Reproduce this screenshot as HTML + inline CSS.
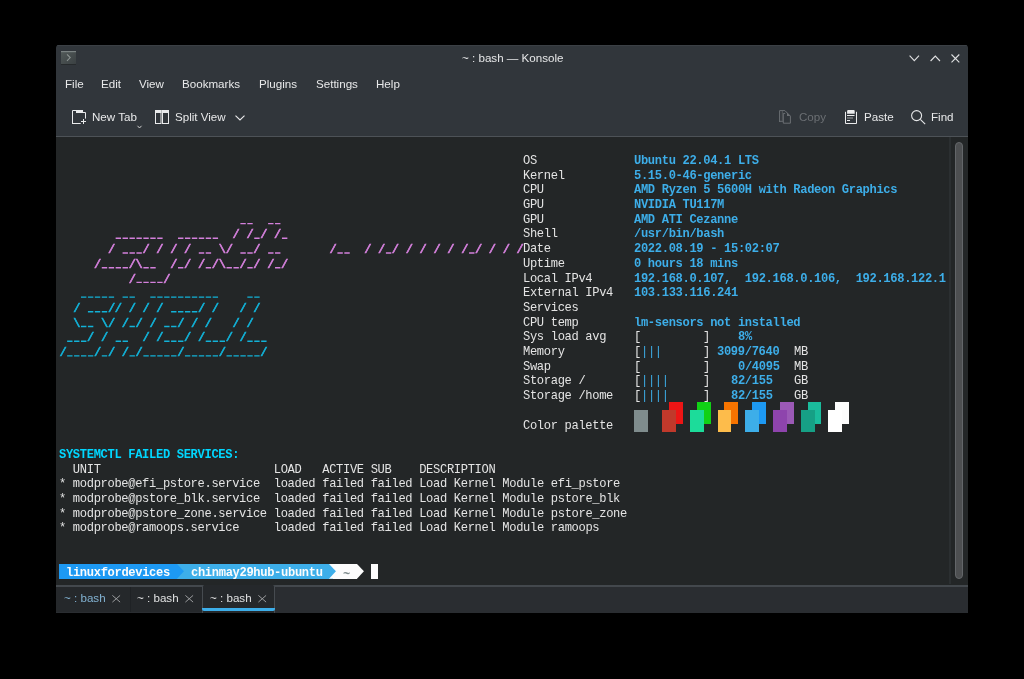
<!DOCTYPE html>
<html><head><meta charset="utf-8">
<style>
html,body{margin:0;padding:0;width:1024px;height:679px;overflow:hidden;background:#000;}
.win{position:absolute;left:56px;top:45px;width:912px;height:567.5px;background:#31363b;border-radius:3px 3px 0 0;overflow:hidden;}
.topline{position:absolute;left:57px;top:45px;width:910px;height:1px;background:#3b4045;border-radius:3px 3px 0 0;}
.term{position:absolute;left:56px;top:137px;width:893px;height:448px;background:#232627;}
.sep{position:absolute;left:56px;top:136px;width:912px;height:1px;background:#4d5257;}
.sbcol{position:absolute;left:949px;top:137px;width:19px;height:448px;background:#232627;}
.sbline{position:absolute;left:949px;top:137px;width:2px;height:447px;background:#2b2f31;}
.sbthumb{position:absolute;left:954.9px;top:142px;width:8.3px;height:437px;background:#4d4f51;border:1px solid #636669;border-radius:4px;box-sizing:border-box;}
.tabbar{position:absolute;left:56px;top:585px;width:912px;height:27.5px;background:#2a2d31;}
.tabline{position:absolute;left:56px;top:585.3px;width:912px;height:1.5px;background:#43484d;}
.tabin{position:absolute;top:586.8px;height:25.7px;background:#25282b;}
.t{position:absolute;will-change:transform;white-space:pre;font-family:"Liberation Mono",monospace;font-size:12.1px;letter-spacing:-0.331px;line-height:14.7px;color:#e4e4e4;}
.m{color:#d480dc;-webkit-text-stroke:0.6px #d480dc;transform:translate(0.4px,0.9px)}
.c{color:#12b2d8;-webkit-text-stroke:0.6px #12b2d8;transform:translate(0.4px,0.9px)}
.b{color:#3daee9;font-weight:bold}
.bb{color:#3daee9}
.h{color:#00d7ff;font-weight:bold}
.pw{color:#fcfcfc;font-weight:bold}
.pd{color:#7f8c8d;font-weight:bold}
.blk{position:absolute;}
.ui{position:absolute;will-change:transform;white-space:pre;font-family:"Liberation Sans",sans-serif;font-size:11.6px;color:#e8e9ea;line-height:11.6px;}
svg.ic{position:absolute;overflow:visible;}
</style></head><body>
<div class="win"></div>
<div class="topline"></div>
<!-- app icon -->
<svg class="ic" style="left:61px;top:51px" width="15" height="14" viewBox="0 0 15 14">
  <defs><linearGradient id="g1" x1="0" y1="0" x2="1" y2="1"><stop offset="0" stop-color="#525a59"/><stop offset="1" stop-color="#3a4042"/></linearGradient></defs>
  <rect x="0" y="0" width="15" height="13.5" fill="url(#g1)"/>
  <rect x="0" y="0" width="15" height="1.2" fill="#7b8383"/>
  <rect x="0" y="13" width="15" height="1" fill="#262a2c"/>
  <path d="M6 3.3 L9.2 6.6 L6 9.8" fill="none" stroke="#8c9492" stroke-width="1.1"/>
</svg>
<div class="ui" style="left:461.7px;top:52.3px;color:#e6e7e8">~ : bash — Konsole</div>
<!-- window buttons -->
<svg class="ic" style="left:909px;top:55px" width="11" height="7" viewBox="0 0 11 7"><path d="M0.6 0.6 L5.3 5.6 L10 0.6" fill="none" stroke="#e0e1e2" stroke-width="1.1"/></svg>
<svg class="ic" style="left:929.5px;top:54.5px" width="11" height="7" viewBox="0 0 11 7"><path d="M0.6 6 L5.3 1 L10 6" fill="none" stroke="#e0e1e2" stroke-width="1.1"/></svg>
<svg class="ic" style="left:951.3px;top:53.5px" width="9" height="9" viewBox="0 0 9 9"><path d="M0.5 0.5 L8.3 8.3 M8.3 0.5 L0.5 8.3" fill="none" stroke="#e0e1e2" stroke-width="1.1"/></svg>
<!-- menu -->
<div class="ui" style="left:64.6px;top:78.3px">File</div>
<div class="ui" style="left:101px;top:78.3px">Edit</div>
<div class="ui" style="left:139px;top:78.3px">View</div>
<div class="ui" style="left:182.2px;top:78.3px">Bookmarks</div>
<div class="ui" style="left:258.8px;top:78.3px">Plugins</div>
<div class="ui" style="left:316px;top:78.3px">Settings</div>
<div class="ui" style="left:376.1px;top:78.3px">Help</div>
<!-- toolbar -->
<svg class="ic" style="left:72px;top:110px" width="14" height="14" viewBox="0 0 14 14">
  <g fill="none" stroke="#eaebec" stroke-width="1">
    <path d="M0.5 14 V0.5 H11"/><path d="M0 13.5 H8.7"/><path d="M11 2.5 H13.5 V8.6"/>
    <path d="M9 11.5 H14 M11.5 9 V14"/>
  </g>
  <rect x="4" y="0" width="7" height="3" fill="#eaebec"/>
</svg>
<div class="ui" style="left:92.2px;top:111px">New Tab</div>
<svg class="ic" style="left:136.5px;top:124.5px" width="5" height="4" viewBox="0 0 5 4"><path d="M0.5 0.8 L2.5 3 L4.5 0.8" fill="none" stroke="#dcdcdc" stroke-width="0.9"/></svg>
<svg class="ic" style="left:155px;top:110px" width="14" height="14" viewBox="0 0 14 14">
  <g fill="none" stroke="#eaebec" stroke-width="1"><rect x="0.5" y="0.5" width="5.5" height="13"/><rect x="7.5" y="0.5" width="6" height="13"/></g>
  <rect x="0" y="0" width="6.5" height="3" fill="#eaebec"/><rect x="7" y="0" width="7" height="3" fill="#eaebec"/>
</svg>
<div class="ui" style="left:174.9px;top:111px">Split View</div>
<svg class="ic" style="left:235px;top:115px" width="10" height="6" viewBox="0 0 10 6"><path d="M0.5 0.6 L5 5 L9.5 0.6" fill="none" stroke="#eaebec" stroke-width="1.1"/></svg>
<svg class="ic" style="left:779px;top:110px" width="13" height="14" viewBox="0 0 13 14">
  <g fill="none" stroke="#6b6f73" stroke-width="1">
    <path d="M0.6 12 V0.6 H5.9 L11.4 6.1 V13.2 H4.3 V3.4 H6.2"/><path d="M0.2 11.3 H4"/><path d="M3.3 1 V11.3" stroke="#55595d"/>
  </g>
  <path d="M5.9 0.6 L11.4 6.1 H8 V3 Z" fill="#6b6f73"/>
</svg>
<div class="ui" style="left:799.3px;top:111px;color:#6b6f73">Copy</div>
<svg class="ic" style="left:844px;top:110px" width="14" height="14" viewBox="0 0 14 14">
  <path d="M1.5 1.8 V13.5 H12.5 V1.8" fill="none" stroke="#eaebec" stroke-width="1"/>
  <path d="M3.1 3.8 V1 Q3.1 0 4.1 0 H9.7 Q10.7 0 10.7 1 V3.8 Z" fill="#eaebec"/>
  <rect x="3" y="5" width="7.5" height="1" fill="#eaebec"/>
  <rect x="3" y="7.5" width="6" height="1" fill="#9c9ea0"/>
  <rect x="3" y="10" width="3" height="1" fill="#eaebec"/>
</svg>
<div class="ui" style="left:864.1px;top:111px">Paste</div>
<svg class="ic" style="left:911px;top:109.5px" width="15" height="15" viewBox="0 0 15 15">
  <circle cx="5.6" cy="5.6" r="5" fill="none" stroke="#e6e7e8" stroke-width="1.1"/>
  <path d="M9.3 9.3 L14.2 14.2" stroke="#e6e7e8" stroke-width="1.1"/>
</svg>
<div class="ui" style="left:931.4px;top:111px">Find</div>
<div class="sep"></div>
<div class="term"></div>
<div class="sbcol"></div>
<div class="sbline"></div>
<div class="sbthumb"></div>
<!-- tabs -->
<div class="tabbar"></div>
<div class="tabline"></div>
<div class="tabin" style="left:56px;width:74px"></div>
<div class="blk" style="left:130px;top:586.8px;width:1px;height:25.7px;background:#1f2225"></div>
<div class="tabin" style="left:131px;width:71.5px"></div>
<div class="blk" style="left:202.3px;top:585px;width:73px;height:27.5px;background:#25282b;border-left:1.3px solid #464b50;border-right:1.3px solid #464b50;border-radius:2px 2px 0 0;box-sizing:border-box;border-top:0"></div>
<div class="blk" style="left:202.3px;top:607.5px;width:73px;height:3.2px;background:#3daee9;border-radius:0 0 2px 2px"></div>
<div class="ui" style="left:63.8px;top:592.3px;color:#82b2d2">~ : bash</div>
<div class="ui" style="left:136.7px;top:592.3px;color:#e0e1e2">~ : bash</div>
<div class="ui" style="left:209.7px;top:592.3px;color:#e0e1e2">~ : bash</div>
<svg class="ic" style="left:112px;top:595px" width="8.5" height="7.5" viewBox="0 0 8.5 7.5"><path d="M0.4 0.4 L8.1 7.1 M8.1 0.4 L0.4 7.1" stroke="#9a9c9e" stroke-width="1"/></svg>
<svg class="ic" style="left:184.8px;top:595px" width="8.5" height="7.5" viewBox="0 0 8.5 7.5"><path d="M0.4 0.4 L8.1 7.1 M8.1 0.4 L0.4 7.1" stroke="#9a9c9e" stroke-width="1"/></svg>
<svg class="ic" style="left:257.5px;top:595px" width="8.5" height="7.5" viewBox="0 0 8.5 7.5"><path d="M0.4 0.4 L8.1 7.1 M8.1 0.4 L0.4 7.1" stroke="#9a9c9e" stroke-width="1"/></svg>
<div class="t f" style="left:523.23px;top:153.90px">OS</div>
<div class="t b" style="left:634.11px;top:153.90px">Ubuntu 22.04.1 LTS</div>
<div class="t f" style="left:523.23px;top:168.60px">Kernel</div>
<div class="t b" style="left:634.11px;top:168.60px">5.15.0-46-generic</div>
<div class="t f" style="left:523.23px;top:183.30px">CPU</div>
<div class="t b" style="left:634.11px;top:183.30px">AMD Ryzen 5 5600H with Radeon Graphics</div>
<div class="t f" style="left:523.23px;top:198.00px">GPU</div>
<div class="t b" style="left:634.11px;top:198.00px">NVIDIA TU117M</div>
<div class="t m" style="left:58.92px;top:212.70px">                                </div>
<div class="t f" style="left:523.23px;top:212.70px">GPU</div>
<div class="t b" style="left:634.11px;top:212.70px">AMD ATI Cezanne</div>
<div class="t m" style="left:58.92px;top:227.40px">                         / / / / </div>
<div class="t f" style="left:523.23px;top:227.40px">Shell</div>
<div class="t b" style="left:634.11px;top:227.40px">/usr/bin/bash</div>
<div class="t m" style="left:58.92px;top:242.10px">       /    / / / /    \/   /          /    / / / / / / / / / / / /</div>
<div class="t f" style="left:523.23px;top:242.10px">Date</div>
<div class="t b" style="left:634.11px;top:242.10px">2022.08.19 - 15:02:07</div>
<div class="t m" style="left:58.92px;top:256.80px">     /    /\    / / / /\  / / / /</div>
<div class="t f" style="left:523.23px;top:256.80px">Uptime</div>
<div class="t b" style="left:634.11px;top:256.80px">0 hours 18 mins</div>
<div class="t m" style="left:58.92px;top:271.50px">          /    /</div>
<div class="t f" style="left:523.23px;top:271.50px">Local IPv4</div>
<div class="t b" style="left:634.11px;top:271.50px">192.168.0.107,  192.168.0.106,  192.168.122.1</div>
<div class="t c" style="left:58.92px;top:286.20px">                             </div>
<div class="t f" style="left:523.23px;top:286.20px">External IPv4</div>
<div class="t b" style="left:634.11px;top:286.20px">103.133.116.241</div>
<div class="t c" style="left:58.92px;top:300.90px">  /    // / / /     / /   / /</div>
<div class="t f" style="left:523.23px;top:300.90px">Services</div>
<div class="t c" style="left:58.92px;top:315.60px">  \   \/ / / /   / / /   / /</div>
<div class="t f" style="left:523.23px;top:315.60px">CPU temp</div>
<div class="t b" style="left:634.11px;top:315.60px">lm-sensors not installed</div>
<div class="t c" style="left:58.92px;top:330.30px">    / /     / /   / /   / /   </div>
<div class="t f" style="left:523.23px;top:330.30px">Sys load avg</div>
<div class="t f" style="left:634.11px;top:330.30px">[</div>
<div class="t f" style="left:703.41px;top:330.30px">]</div>
<div class="t b" style="left:738.06px;top:330.30px">8%</div>
<div class="t c" style="left:58.92px;top:345.00px">/    / / / /     /     /     /</div>
<div class="t f" style="left:523.23px;top:345.00px">Memory</div>
<div class="t f" style="left:634.11px;top:345.00px">[</div>
<div class="t bb" style="left:641.04px;top:345.00px">|||</div>
<div class="t f" style="left:703.41px;top:345.00px">]</div>
<div class="t b" style="left:717.27px;top:345.00px">3099/7640</div>
<div class="t f" style="left:793.50px;top:345.00px">MB</div>
<div class="t f" style="left:523.23px;top:359.70px">Swap</div>
<div class="t f" style="left:634.11px;top:359.70px">[</div>
<div class="t f" style="left:703.41px;top:359.70px">]</div>
<div class="t b" style="left:738.06px;top:359.70px">0/4095</div>
<div class="t f" style="left:793.50px;top:359.70px">MB</div>
<div class="t f" style="left:523.23px;top:374.40px">Storage /</div>
<div class="t f" style="left:634.11px;top:374.40px">[</div>
<div class="t bb" style="left:641.04px;top:374.40px">||||</div>
<div class="t f" style="left:703.41px;top:374.40px">]</div>
<div class="t b" style="left:731.13px;top:374.40px">82/155</div>
<div class="t f" style="left:793.50px;top:374.40px">GB</div>
<div class="t f" style="left:523.23px;top:389.10px">Storage /home</div>
<div class="t f" style="left:634.11px;top:389.10px">[</div>
<div class="t bb" style="left:641.04px;top:389.10px">||||</div>
<div class="t f" style="left:703.41px;top:389.10px">]</div>
<div class="t b" style="left:731.13px;top:389.10px">82/155</div>
<div class="t f" style="left:793.50px;top:389.10px">GB</div>
<div class="t f" style="left:523.23px;top:418.50px">Color palette</div>
<div class="t h" style="left:58.92px;top:447.90px">SYSTEMCTL FAILED SERVICES:</div>
<div class="t f" style="left:58.92px;top:462.60px">  UNIT                         LOAD   ACTIVE SUB    DESCRIPTION</div>
<div class="t f" style="left:58.92px;top:477.30px">* modprobe@efi_pstore.service  loaded failed failed Load Kernel Module efi_pstore</div>
<div class="t f" style="left:58.92px;top:492.00px">* modprobe@pstore_blk.service  loaded failed failed Load Kernel Module pstore_blk</div>
<div class="t f" style="left:58.92px;top:506.70px">* modprobe@pstore_zone.service loaded failed failed Load Kernel Module pstore_zone</div>
<div class="t f" style="left:58.92px;top:521.40px">* modprobe@ramoops.service     loaded failed failed Load Kernel Module ramoops</div>
<svg class="blk" style="left:0;top:0" width="1024" height="679"><path d="M240.38 222.90h5.4v1.4h-5.4zM247.31 222.90h5.4v1.4h-5.4zM268.10 222.90h5.4v1.4h-5.4zM275.03 222.90h5.4v1.4h-5.4zM115.64 237.60h5.4v1.4h-5.4zM122.57 237.60h5.4v1.4h-5.4zM129.50 237.60h5.4v1.4h-5.4zM136.43 237.60h5.4v1.4h-5.4zM143.36 237.60h5.4v1.4h-5.4zM150.29 237.60h5.4v1.4h-5.4zM157.22 237.60h5.4v1.4h-5.4zM178.01 237.60h5.4v1.4h-5.4zM184.94 237.60h5.4v1.4h-5.4zM191.87 237.60h5.4v1.4h-5.4zM198.80 237.60h5.4v1.4h-5.4zM205.73 237.60h5.4v1.4h-5.4zM212.66 237.60h5.4v1.4h-5.4zM254.24 237.60h5.4v1.4h-5.4zM281.96 237.60h5.4v1.4h-5.4zM122.57 252.30h5.4v1.4h-5.4zM129.50 252.30h5.4v1.4h-5.4zM136.43 252.30h5.4v1.4h-5.4zM198.80 252.30h5.4v1.4h-5.4zM205.73 252.30h5.4v1.4h-5.4zM240.38 252.30h5.4v1.4h-5.4zM247.31 252.30h5.4v1.4h-5.4zM268.10 252.30h5.4v1.4h-5.4zM275.03 252.30h5.4v1.4h-5.4zM337.40 252.30h5.4v1.4h-5.4zM344.33 252.30h5.4v1.4h-5.4zM385.91 252.30h5.4v1.4h-5.4zM469.07 252.30h5.4v1.4h-5.4zM101.78 267.00h5.4v1.4h-5.4zM108.71 267.00h5.4v1.4h-5.4zM115.64 267.00h5.4v1.4h-5.4zM122.57 267.00h5.4v1.4h-5.4zM143.36 267.00h5.4v1.4h-5.4zM150.29 267.00h5.4v1.4h-5.4zM178.01 267.00h5.4v1.4h-5.4zM205.73 267.00h5.4v1.4h-5.4zM226.52 267.00h5.4v1.4h-5.4zM233.45 267.00h5.4v1.4h-5.4zM247.31 267.00h5.4v1.4h-5.4zM275.03 267.00h5.4v1.4h-5.4zM136.43 281.70h5.4v1.4h-5.4zM143.36 281.70h5.4v1.4h-5.4zM150.29 281.70h5.4v1.4h-5.4zM157.22 281.70h5.4v1.4h-5.4z" fill="#d480dc"/><path d="M80.99 296.40h5.4v1.4h-5.4zM87.92 296.40h5.4v1.4h-5.4zM94.85 296.40h5.4v1.4h-5.4zM101.78 296.40h5.4v1.4h-5.4zM108.71 296.40h5.4v1.4h-5.4zM122.57 296.40h5.4v1.4h-5.4zM129.50 296.40h5.4v1.4h-5.4zM150.29 296.40h5.4v1.4h-5.4zM157.22 296.40h5.4v1.4h-5.4zM164.15 296.40h5.4v1.4h-5.4zM171.08 296.40h5.4v1.4h-5.4zM178.01 296.40h5.4v1.4h-5.4zM184.94 296.40h5.4v1.4h-5.4zM191.87 296.40h5.4v1.4h-5.4zM198.80 296.40h5.4v1.4h-5.4zM205.73 296.40h5.4v1.4h-5.4zM212.66 296.40h5.4v1.4h-5.4zM247.31 296.40h5.4v1.4h-5.4zM254.24 296.40h5.4v1.4h-5.4zM87.92 311.10h5.4v1.4h-5.4zM94.85 311.10h5.4v1.4h-5.4zM101.78 311.10h5.4v1.4h-5.4zM171.08 311.10h5.4v1.4h-5.4zM178.01 311.10h5.4v1.4h-5.4zM184.94 311.10h5.4v1.4h-5.4zM191.87 311.10h5.4v1.4h-5.4zM80.99 325.80h5.4v1.4h-5.4zM87.92 325.80h5.4v1.4h-5.4zM129.50 325.80h5.4v1.4h-5.4zM164.15 325.80h5.4v1.4h-5.4zM171.08 325.80h5.4v1.4h-5.4zM67.13 340.50h5.4v1.4h-5.4zM74.06 340.50h5.4v1.4h-5.4zM80.99 340.50h5.4v1.4h-5.4zM115.64 340.50h5.4v1.4h-5.4zM122.57 340.50h5.4v1.4h-5.4zM164.15 340.50h5.4v1.4h-5.4zM171.08 340.50h5.4v1.4h-5.4zM178.01 340.50h5.4v1.4h-5.4zM205.73 340.50h5.4v1.4h-5.4zM212.66 340.50h5.4v1.4h-5.4zM219.59 340.50h5.4v1.4h-5.4zM247.31 340.50h5.4v1.4h-5.4zM254.24 340.50h5.4v1.4h-5.4zM261.17 340.50h5.4v1.4h-5.4zM67.13 355.20h5.4v1.4h-5.4zM74.06 355.20h5.4v1.4h-5.4zM80.99 355.20h5.4v1.4h-5.4zM87.92 355.20h5.4v1.4h-5.4zM101.78 355.20h5.4v1.4h-5.4zM129.50 355.20h5.4v1.4h-5.4zM143.36 355.20h5.4v1.4h-5.4zM150.29 355.20h5.4v1.4h-5.4zM157.22 355.20h5.4v1.4h-5.4zM164.15 355.20h5.4v1.4h-5.4zM171.08 355.20h5.4v1.4h-5.4zM184.94 355.20h5.4v1.4h-5.4zM191.87 355.20h5.4v1.4h-5.4zM198.80 355.20h5.4v1.4h-5.4zM205.73 355.20h5.4v1.4h-5.4zM212.66 355.20h5.4v1.4h-5.4zM226.52 355.20h5.4v1.4h-5.4zM233.45 355.20h5.4v1.4h-5.4zM240.38 355.20h5.4v1.4h-5.4zM247.31 355.20h5.4v1.4h-5.4zM254.24 355.20h5.4v1.4h-5.4z" fill="#12b2d8"/></svg>
<div class="blk" style="left:641.32px;top:402.30px;width:13.86px;height:22.05px;background:#232627"></div>
<div class="blk" style="left:634.39px;top:409.65px;width:13.86px;height:22.05px;background:#7f8c8d"></div>
<div class="blk" style="left:669.04px;top:402.30px;width:13.86px;height:22.05px;background:#ed1515"></div>
<div class="blk" style="left:662.11px;top:409.65px;width:13.86px;height:22.05px;background:#c0392b"></div>
<div class="blk" style="left:696.76px;top:402.30px;width:13.86px;height:22.05px;background:#11d116"></div>
<div class="blk" style="left:689.83px;top:409.65px;width:13.86px;height:22.05px;background:#1cdc9a"></div>
<div class="blk" style="left:724.48px;top:402.30px;width:13.86px;height:22.05px;background:#f67400"></div>
<div class="blk" style="left:717.55px;top:409.65px;width:13.86px;height:22.05px;background:#fdbc4b"></div>
<div class="blk" style="left:752.20px;top:402.30px;width:13.86px;height:22.05px;background:#1d99f3"></div>
<div class="blk" style="left:745.27px;top:409.65px;width:13.86px;height:22.05px;background:#3daee9"></div>
<div class="blk" style="left:779.92px;top:402.30px;width:13.86px;height:22.05px;background:#9b59b6"></div>
<div class="blk" style="left:772.99px;top:409.65px;width:13.86px;height:22.05px;background:#8e44ad"></div>
<div class="blk" style="left:807.64px;top:402.30px;width:13.86px;height:22.05px;background:#1abc9c"></div>
<div class="blk" style="left:800.71px;top:409.65px;width:13.86px;height:22.05px;background:#16a085"></div>
<div class="blk" style="left:835.36px;top:402.30px;width:13.86px;height:22.05px;background:#fcfcfc"></div>
<div class="blk" style="left:828.43px;top:409.65px;width:13.86px;height:22.05px;background:#ffffff"></div>
<div class="blk" style="left:59.20px;top:564.00px;width:117.81px;height:14.7px;background:#1d99f3"></div>
<div class="t pw" style="left:65.85px;top:565.50px">linuxfordevices</div>
<div class="blk" style="left:177.01px;top:564.00px;width:159.39px;height:14.7px;background:#3daee9"></div>
<svg class="blk" style="left:177.01px;top:564.00px" width="6.93" height="14.7" viewBox="0 0 10 20" preserveAspectRatio="none"><path d="M0 0 L10 10 L0 20 Z" fill="#1d99f3"/></svg>
<div class="t pw" style="left:190.59px;top:565.50px">chinmay29hub-ubuntu</div>
<div class="blk" style="left:332.94px;top:564.00px;width:24.25px;height:14.7px;background:#fcfcfc"></div>
<svg class="blk" style="left:329.47px;top:564.00px" width="6.93" height="14.7" viewBox="0 0 10 20" preserveAspectRatio="none"><rect x="0" y="0" width="10" height="20" fill="#fcfcfc"/><path d="M0 0 L10 10 L0 20 Z" fill="#3daee9"/></svg>
<div class="t pd" style="left:343.05px;top:567.70px">~</div>
<svg class="blk" style="left:357.19px;top:564.00px" width="6.93" height="14.7" viewBox="0 0 10 20" preserveAspectRatio="none"><path d="M0 0 L10 10 L0 20 Z" fill="#fcfcfc"/></svg>
<div class="blk" style="left:371.05px;top:564.00px;width:6.93px;height:14.7px;background:#fcfcfc"></div>

</body></html>
